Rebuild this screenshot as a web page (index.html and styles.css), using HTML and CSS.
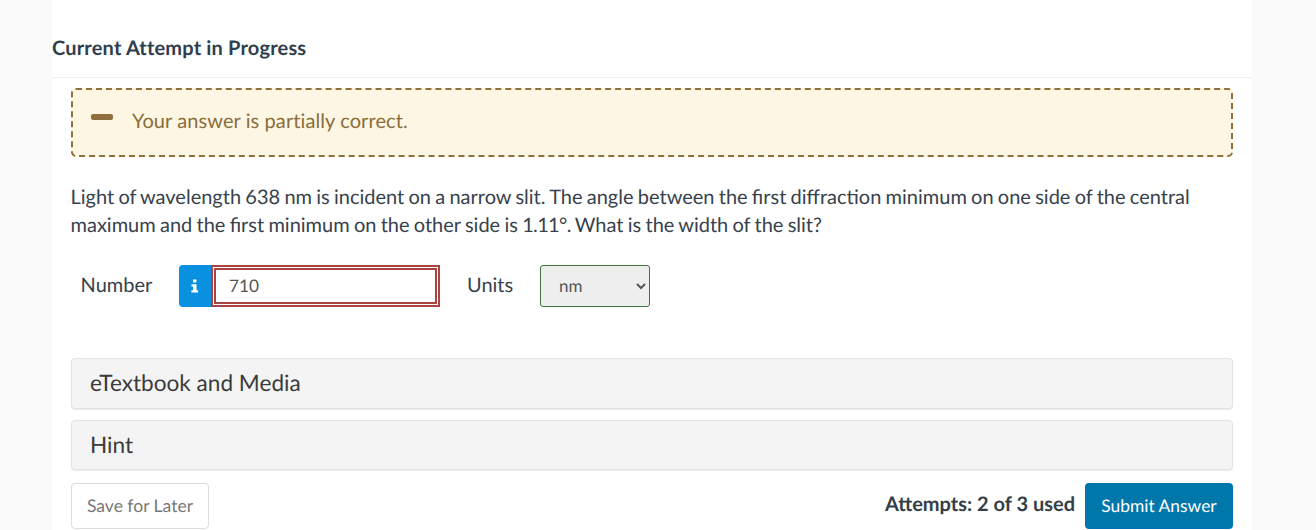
FILE: index.html
```html
<!DOCTYPE html>
<html lang="en">
<head>
<meta charset="utf-8">
<title>Current Attempt in Progress</title>
<link rel="stylesheet" href="styles.css">
</head>
<body>
<main class="page">
  <header class="head"><h1 class="title">Current Attempt in Progress</h1></header>
  <section class="content">
    <div class="alert">
      <span class="dash"></span>
      <span class="alert-text">Your answer is partially correct.</span>
    </div>
    <div class="question">
      <div class="qline">Light of wavelength 638 nm is incident on a narrow slit. The angle between the first diffrac&zwnj;tion minimum on one side of the central</div>
      <div class="qline">maximum and the first minimum on the other side is <span class="deg">1.11°.</span> What is the width of the slit?</div>
    </div>
    <div class="answer">
      <label class="label">Number</label>
      <div class="group">
        <button class="info" type="button"><svg width="10" height="14" viewBox="0 0 10 14"><path d="M3 0.5h3.4v3H3zM1.5 5.2h5v6h1.6v2.3H1.4v-2.3h1.7V7.5H1.5z" fill="#fff"/></svg></button>
        <input class="num" type="text" value="710">
      </div>
      <label class="label units">Units</label>
      <select class="select"><option>nm</option></select>
    </div>
    <div class="panel first">eTextbook and Media</div>
    <div class="panel second">Hint</div>
    <div class="actions">
      <button class="save" type="button">Save for Later</button>
      <div class="right">
        <span class="attempts">Attempts: 2 of 3 used</span>
        <button class="submit" type="button">Submit Answer</button>
      </div>
    </div>
  </section>
</main>
</body>
</html>
```
FILE: styles.css
```css
* { box-sizing: border-box; }
html, body { margin: 0; height: 530px; overflow: hidden; }
body { background: #fafafa; font-family: Lato, "Liberation Sans", sans-serif; color: #333f48; text-rendering: geometricPrecision; }
.page { width: 1200px; height: 530px; margin-left: 52px; background: #fff; }
.head { height: 78px; border-bottom: 1px solid #eee; padding-top: 35px; }
.title { margin: 0; font-size: 20px; line-height: 26px; font-weight: 700; color: #2f3e4d; letter-spacing: 0.18px; }
.content { padding: 10px 19px 0; }
.alert { height: 69px; display: flex; align-items: center; background: #fdf6e3; border: 2px dashed #8f6f3c; border-radius: 5px; padding-left: 18px; color: #8a6d3b; }
.dash { width: 22px; height: 6px; border-radius: 2px; background: #8f6f3c; margin-bottom: 12px; }
.alert-text { font-size: 20px; margin-left: 19px; margin-bottom: 4px; font-variant-ligatures: none; letter-spacing: 0.09px; }
.question { margin: 26px 0 0 -0.5px; font-size: 20px; line-height: 28px; color: #38424c; word-spacing: -0.87px; }
.qline { white-space: nowrap; }
.deg { letter-spacing: -0.65px; }
.answer { display: flex; align-items: center; height: 42px; margin-top: 26px; }
.label { font-size: 20px; color: #38424c; margin-left: 9.6px; width: 98.4px; margin-bottom: 3px; }
.group { display: flex; height: 42px; }
.info { width: 33px; height: 42px; padding: 0; border: 0; background: #0a90e0; border-radius: 4px 0 0 4px; display: flex; align-items: center; justify-content: center; }
.num { width: 229px; height: 42px; margin-left: -1px; border: 5px double #a94442; padding: 0 13px 2px; font: 17.3px Lato, sans-serif; text-rendering: geometricPrecision; color: #555; outline: none; background: #fff; }
.label.units { margin-left: 27px; width: 73px; }
.select { width: 110px; height: 42px; border: 1px solid #3c763d; border-radius: 3px; background-color: #eee; color: #555; font: 17px Lato, sans-serif; text-rendering: geometricPrecision; padding: 0 0 2px 14px; }
.panel { background: #f4f4f4; border: 1px solid #e3e3e3; border-radius: 4px; box-shadow: 0 1px 1px rgba(0, 0, 0, 0.08); font-size: 22.6px; color: #3b3b3b; padding: 0 0 3px 18px; display: flex; align-items: center; }
.panel.first { height: 51px; margin-top: 51px; }
.panel.second { height: 50px; margin-top: 11px; padding-bottom: 1px; }
.actions { display: flex; justify-content: space-between; align-items: center; margin-top: 13px; height: 46px; }
.save { width: 138px; height: 46px; background: #fff; border: 1px solid #ddd; border-radius: 4px; font: 17.5px Lato, sans-serif; text-rendering: geometricPrecision; color: #777; padding: 0 0 2px; }
.right { display: flex; align-items: center; gap: 10px; }
.attempts { font-size: 20px; font-weight: 700; color: #333f48; margin-bottom: 5px; }
.submit { width: 148px; height: 46px; background: #0077ab; border: 0; border-radius: 4px; font: 17.4px Lato, sans-serif; text-rendering: geometricPrecision; color: #fff; padding: 0 0 2px; }
```
